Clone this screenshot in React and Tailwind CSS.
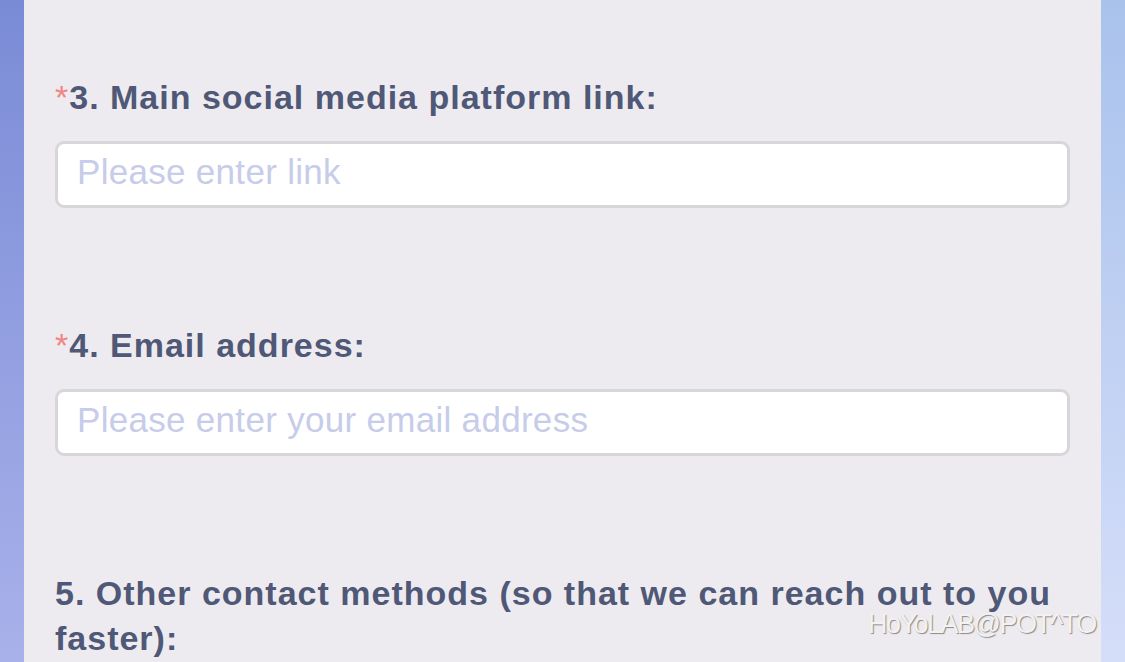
const fields = [
    { required: true, label: "3. Main social media platform link:", placeholder: "Please enter link" },
    { required: true, label: "4. Email address:", placeholder: "Please enter your email address" },
]

const Label = ({ required, children }) => (
    <h2 className=" text-[34px] leading-[45px] font-bold tracking-[1px] text-[#4f5876] ">
        {required && <span className=" font-normal text-[#f08583] ">*</span>}
        {children}
    </h2>
)

const App = () => {
    return (
        <div className=" relative flex h-[662px] w-full overflow-hidden font-['Liberation_Sans',Arial,sans-serif] ">
            <div className=" w-[24px] shrink-0 bg-gradient-to-b from-[#7a8bd6] to-[#a9b1ea] " />

            <main className=" flex-1 bg-[#edebf0] pl-[31px] pr-[31px] pt-[75px] ">
                {fields.map((item, index) => (
                    <section key={index} className=" mb-[115px] ">
                        <Label required={item.required}>{item.label}</Label>
                        <input
                            type="text"
                            placeholder={item.placeholder}
                            className=" mt-[21px] block h-[67px] w-full rounded-[9px] border-[3px] border-[#d7d7da] bg-white px-[19px] pb-[5px] text-[35px] tracking-[0.3px] text-[#4f5876] outline-none placeholder:text-[#c6cce9] "
                        />
                    </section>
                ))}

                <section>
                    <Label>5. Other contact methods (so that we can reach out to you faster):</Label>
                </section>
            </main>

            <div className=" w-[24px] shrink-0 bg-gradient-to-b from-[#a9c2ec] to-[#d5def9] " />

            <span className=" absolute left-[868px] top-[611px] text-[27px] leading-none tracking-[-1.5px] text-[#f2f2f2] [text-shadow:1px_1px_1px_#8a8a8a] ">
                HoYoLAB@POT^TO
            </span>
        </div>
    )
}

export default App
